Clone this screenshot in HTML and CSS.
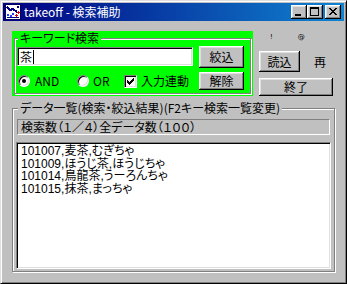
FILE: index.html
```html
<!DOCTYPE html>
<html lang="ja">
<head>
<meta charset="utf-8">
<title>takeoff - 検索補助</title>
<link rel="stylesheet" href="styles.css">
</head>
<body>
<div class="window">
  <div class="titlebar">
    <svg class="app-icon" viewBox="0 0 16 16" shape-rendering="crispEdges">
      <rect x="0" y="0" width="16" height="16" fill="#ffffff"/>
      <rect x="0.5" y="0.5" width="15" height="15" fill="none" stroke="#000060"/>
      <polyline points="2,3 5,6 8,5 12,8" fill="none" stroke="#000080" stroke-width="2"/>
      <rect x="12" y="2" width="2" height="2" fill="#000080"/>
      <path d="M12 8h3M13.5 6.5v3" stroke="#e00000" stroke-width="1"/>
      <path d="M10 11h3M11.5 9.5v3" stroke="#e00000" stroke-width="1"/>
      <rect x="2" y="10" width="2" height="2" fill="#2040ff"/>
      <rect x="5" y="11" width="2" height="2" fill="#2040ff"/>
      <rect x="7" y="9" width="2" height="2" fill="#2040ff"/>
      <rect x="2" y="13" width="12" height="1" fill="#000080"/>
    </svg>
    <span class="title">takeoff - 検索補助</span>
    <div class="caption-btns">
      <span class="cbtn">
        <svg viewBox="0 0 16 14" shape-rendering="crispEdges"><rect x="4" y="9" width="6" height="2" fill="#000"/></svg>
      </span>
      <span class="cbtn">
        <svg viewBox="0 0 16 14" shape-rendering="crispEdges"><rect x="3.5" y="2.5" width="8" height="8" fill="none" stroke="#000"/><rect x="3" y="2" width="9" height="2" fill="#000"/></svg>
      </span>
      <span class="cbtn cbtn-close">
        <svg viewBox="0 0 16 14" shape-rendering="crispEdges"><path d="M4 3h2v1h-2zM10 3h2v1h-2zM5 4h2v1h-2zM9 4h2v1h-2zM6 5h4v1h-4zM7 6h2v1h-2zM6 7h4v1h-4zM5 8h2v1h-2zM9 8h2v1h-2zM4 9h2v1h-2zM10 9h2v1h-2z" fill="#000"/></svg>
      </span>
    </div>
  </div>
  <div class="client">
    <div class="top-row">
      <div class="kw-panel">
        <fieldset class="group kw-group">
          <legend class="kw-legend">キーワード検索</legend>
          <div class="kw-grid">
            <div class="textbox">茶<span class="caret"></span></div>
            <button class="btn btn-filter">絞込</button>
            <div class="options">
              <span class="opt opt-and"><span class="radio checked"></span>AND</span>
              <span class="opt opt-or"><span class="radio"></span>OR</span>
              <span class="opt opt-link"><span class="checkbox"><svg viewBox="0 0 9 9" shape-rendering="crispEdges"><path d="M1 3h1v3h-1zM2 4h1v3h-1zM3 5h1v3h-1zM4 4h1v3h-1zM5 3h1v3h-1zM6 2h1v3h-1zM7 1h1v3h-1z" fill="#000"/></svg></span>入力連動</span>
            </div>
            <button class="btn btn-clear">解除</button>
          </div>
        </fieldset>
      </div>
      <div class="side">
        <div class="marks"><span class="mark-excl">!</span><span class="mark-at">@</span></div>
        <div class="load-row"><button class="btn btn-load">読込</button><span class="re">再</span></div>
        <button class="btn btn-exit">終了</button>
      </div>
    </div>
    <fieldset class="group data-group">
      <legend class="data-legend">データ一覧(検索・絞込結果)(F2キー検索一覧変更)</legend>
      <div class="status">検索数（１／４）全データ数（１００）</div>
      <div class="listbox">
        <div class="item">101007,麦茶,むぎちゃ</div>
        <div class="item">101009,ほうじ茶,ほうじちゃ</div>
        <div class="item">101014,鳥龍茶,うーろんちゃ</div>
        <div class="item">101015,抹茶,まっちゃ</div>
      </div>
    </fieldset>
  </div>
</div>
</body>
</html>
```

FILE: styles.css
```css
* { box-sizing: border-box; }
html, body { margin: 0; padding: 0; }
body {
  background: #c0c0c0;
  font-family: "Noto Sans CJK JP", "Noto Sans", sans-serif;
  font-size: 12px;
  font-feature-settings: "palt";
  color: #000;
}
.window {
  width: 347px;
  height: 284px;
  display: flex;
  flex-direction: column;
  background: #c0c0c0;
  border: 1px solid;
  border-color: #dfdfdf #000 #000 #dfdfdf;
  box-shadow: inset 1px 1px 0 #fff, inset -1px -1px 0 #808080;
  padding: 2px;
}
.titlebar {
  flex: none;
  height: 18px;
  display: flex;
  align-items: center;
  padding: 0 3px 0 2px;
  background: linear-gradient(to right, #000080, #1084d0);
  color: #fff;
}
.app-icon { width: 16px; height: 16px; flex: none; margin-right: 3px; display: block; }
.title { flex: 1; font-size: 12px; line-height: 18px; white-space: nowrap; }
.caption-btns { display: flex; align-items: center; }
.cbtn {
  display: block;
  width: 16px;
  height: 14px;
  background: #c0c0c0;
  box-shadow: inset -1px -1px #000, inset 1px 1px #fff, inset -2px -2px #808080, inset 2px 2px #dfdfdf;
}
.cbtn svg { display: block; width: 16px; height: 14px; }
.cbtn-close { margin-left: 2px; }

.client {
  flex: 1;
  display: flex;
  flex-direction: column;
  padding: 10px 9px 9px 9px;
}
.top-row { display: flex; height: 65px; flex: none; }
.kw-panel {
  width: 241px;
  background: #00ff00;
  padding: 0 2px 2px 2px;
}
.group {
  margin: 0;
  min-width: 0;
  border: 1px solid #808080;
  box-shadow: inset 1px 1px 0 #fff, 1px 1px 0 #fff;
}
.group legend {
  padding: 0 2px;
  line-height: 14px;
  font-size: 12px;
}
.kw-group { padding: 1px 4px 3px 2px; }
.kw-legend { margin-left: 1px; background: #00ff00; }
.kw-grid {
  display: grid;
  grid-template-columns: 176px 45px;
  grid-template-rows: 22px 18px;
  column-gap: 6px;
  row-gap: 4px;
}
.textbox {
  width: 176px;
  height: 19px;
  margin-top: 1px;
  background: #fff;
  border: 1px solid;
  border-color: #808080 #fff #fff #808080;
  box-shadow: inset 1px 1px #000, inset -1px -1px #dfdfdf;
  padding: 0 0 0 2px;
  display: flex;
  align-items: center;
  line-height: 15px;
}
.caret { width: 1px; height: 14px; background: #000; margin-left: 1px; }
.btn {
  font: inherit;
  font-size: 12px;
  line-height: 14px;
  color: #000;
  background: #c0c0c0;
  border: 0;
  margin: 0;
  padding: 0;
  display: flex;
  align-items: center;
  justify-content: center;
  box-shadow: inset -1px -1px #000, inset 1px 1px #fff, inset -2px -2px #808080, inset 2px 2px #dfdfdf;
}
.btn-filter { width: 45px; height: 22px; }
.btn-clear { width: 45px; height: 18px; }
.options { display: flex; align-items: center; }
.opt { display: flex; align-items: center; flex: none; line-height: 14px; }
.opt-and { width: 59px; margin-left: 1px; gap: 5px; }
.opt-or { width: 47px; gap: 4px; }
.opt-link { gap: 4px; }
.radio {
  position: relative;
  width: 12px;
  height: 12px;
  border-radius: 50%;
  background: #fff;
  border: 1px solid;
  border-color: #808080 #fff #fff #808080;
  box-shadow: inset 1px 1px #000, inset -1px -1px #dfdfdf;
  flex: none;
}
.radio.checked::after {
  content: "";
  position: absolute;
  left: 3px;
  top: 3px;
  width: 4px;
  height: 4px;
  border-radius: 50%;
  background: #000;
}
.checkbox {
  width: 13px;
  height: 13px;
  background: #fff;
  border: 1px solid;
  border-color: #808080 #fff #fff #808080;
  box-shadow: inset 1px 1px #000, inset -1px -1px #dfdfdf;
  padding: 1px;
  flex: none;
}
.checkbox svg { display: block; width: 9px; height: 9px; }

.side { width: 74px; margin-left: 6px; display: flex; flex-direction: column; }
.marks { height: 20px; display: flex; padding-top: 2px; font-family: "DejaVu Sans", sans-serif; font-size: 7px; line-height: 9px; }
.mark-excl { margin-left: 11px; }
.mark-at { margin-left: 25px; }
.load-row { display: flex; align-items: center; height: 21px; }
.btn-load { width: 41px; height: 21px; }
.re { margin-left: 14px; line-height: 14px; }
.btn-exit { width: 74px; height: 18px; margin-top: 6px; }

.data-group {
  flex: 1;
  margin-top: 5px;
  padding: 4px 3px 2px 3px;
  display: flex;
  flex-direction: column;
}
.data-legend { margin-left: 2px; background: #c0c0c0; }
.status {
  height: 16px;
  margin: 0 1px;
  border: 1px solid;
  border-color: #808080 #fff #fff #808080;
  padding: 0 0 0 3px;
  line-height: 14px;
  white-space: nowrap;
  overflow: hidden;
}
.listbox {
  flex: 1;
  margin-top: 7px;
  background: #fff;
  border: 1px solid;
  border-color: #808080 #fff #fff #808080;
  box-shadow: inset 1px 1px #000, inset -1px -1px #dfdfdf;
  padding: 2px 3px 0 4px;
}
.item {
  font-family: "Liberation Sans", "Noto Sans CJK JP", sans-serif;
  line-height: 12.5px;
  font-size: 12px;
  white-space: nowrap;
}
```
